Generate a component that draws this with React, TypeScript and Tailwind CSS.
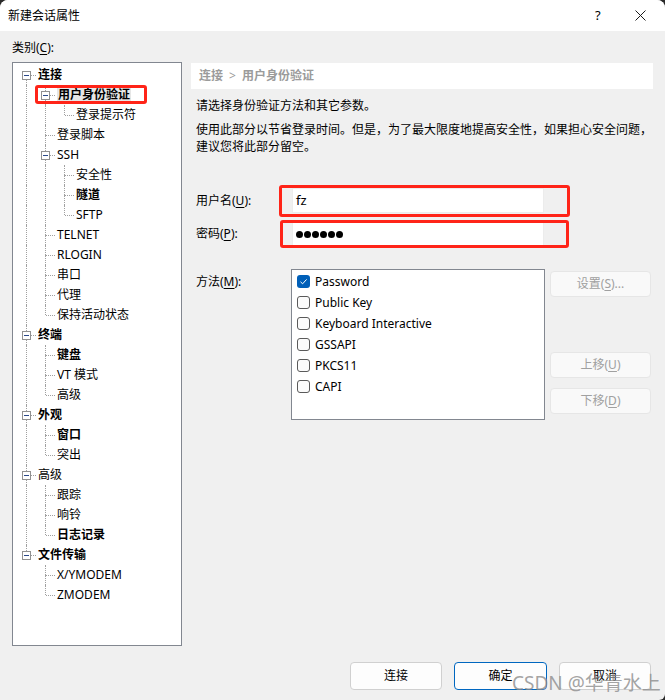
import React from "react";

type Node = { l: string; b?: boolean; sel?: boolean; c?: Node[] };

const tree: Node[] = [
  {
    l: "连接",
    b: true,
    c: [
      { l: "用户身份验证", b: true, sel: true, c: [{ l: "登录提示符" }] },
      { l: "登录脚本" },
      { l: "SSH", c: [{ l: "安全性" }, { l: "隧道", b: true }, { l: "SFTP" }] },
      { l: "TELNET" },
      { l: "RLOGIN" },
      { l: "串口" },
      { l: "代理" },
      { l: "保持活动状态" },
    ],
  },
  { l: "终端", b: true, c: [{ l: "键盘", b: true }, { l: "VT 模式" }, { l: "高级" }] },
  { l: "外观", b: true, c: [{ l: "窗口", b: true }, { l: "突出" }] },
  { l: "高级", c: [{ l: "跟踪" }, { l: "响铃" }, { l: "日志记录", b: true }] },
  { l: "文件传输", b: true, c: [{ l: "X/YMODEM" }, { l: "ZMODEM" }] },
];

function Guide({ through }: { through: boolean }) {
  return (
    <div className="relative w-[19px] h-[20px] shrink-0">
      {through && (
        <div className="absolute left-[9px] top-0 bottom-0 border-l border-dotted border-[#a0a0a0]" />
      )}
    </div>
  );
}

function Own({ up, down, box }: { up: boolean; down: boolean; box: boolean }) {
  return (
    <div className="relative w-[19px] h-[20px] shrink-0">
      {up && <div className="absolute left-[9px] top-0 h-[10px] border-l border-dotted border-[#a0a0a0]" />}
      {down && <div className="absolute left-[9px] top-[10px] bottom-0 border-l border-dotted border-[#a0a0a0]" />}
      <div className="absolute left-[10px] right-0 top-[10px] h-0 border-t border-dotted border-[#a0a0a0]" />
      {box && (
        <div className="absolute left-[5px] top-[6px] w-[9px] h-[9px] border border-[#919191] bg-white flex items-center justify-center">
          <div className="w-[5px] h-[1px] bg-[#2b4a8b]" />
        </div>
      )}
    </div>
  );
}

function renderNodes(nodes: Node[], depth: number, cont: boolean[]): React.ReactNode[] {
  const out: React.ReactNode[] = [];
  nodes.forEach((n, i) => {
    const isLast = i === nodes.length - 1;
    const up = !(depth === 0 && i === 0);
    out.push(
      <div key={`${depth}-${n.l}-${i}-${out.length}`} className="flex h-[20px] items-center">
        {cont.map((c, k) => (
          <Guide key={k} through={c} />
        ))}
        <Own up={up} down={!isLast} box={!!n.c} />
        <span
          className={`ml-[2px] leading-[18px] text-[12px] text-black whitespace-nowrap ${
            n.b ? "font-bold" : "font-normal"
          } ${n.sel ? "bg-[#e6e6e6] px-[1px]" : ""}`}
        >
          {n.l}
        </span>
      </div>
    );
    if (n.c) out.push(...renderNodes(n.c, depth + 1, [...cont, !isLast]));
  });
  return out;
}

function U({ children }: { children: React.ReactNode }) {
  return <span className="underline underline-offset-2">{children}</span>;
}

const methods = ["Password", "Public Key", "Keyboard Interactive", "GSSAPI", "PKCS11", "CAPI"];

export default function App() {
  return (
    <div
      className="w-[665px] h-[700px] overflow-hidden bg-[#2a2a2a] text-[12px] text-black"
      style={{ fontFamily: '"Noto Sans", "Noto Sans CJK SC", sans-serif' }}
    >
      <div className="relative w-[665px] h-[700px] bg-[#f0f0f0] rounded-t-[8px] rounded-br-[6px] overflow-hidden">
        {/* Title bar */}
        <div className="h-[31px] bg-white flex items-center pl-[8px] relative">
          <span className="text-[12px] leading-[16px] pt-[1px]">新建会话属性</span>
          <span className="absolute left-[595px] top-[6px] text-[13px] leading-[18px]">?</span>
          <svg className="absolute left-[635px] top-[10px]" width="11" height="11" viewBox="0 0 11 11">
            <path d="M0.5 0.5 L10.5 10.5 M10.5 0.5 L0.5 10.5" stroke="#1a1a1a" strokeWidth="1" />
          </svg>
        </div>

        <div className="px-[12px]">
          <div className="h-[31px] pt-[9px] leading-[16px]">
            类别(<U>C</U>):
          </div>

          <div className="flex gap-[9px]">
            {/* Tree */}
            <div className="relative w-[170px] h-[584px] border border-[#828790] bg-white pt-[2px] pl-[4px]">
              {renderNodes(tree, 0, [])}
              <div className="absolute left-[22px] top-[22px] w-[112px] h-[19px] border-[3px] border-[#ff2418] rounded-[3px]" />
            </div>

            {/* Right panel */}
            <div className="w-[462px]">
              <div className="mt-[1px] h-[26px] bg-white flex items-center pl-[8px] text-[#9b9b9b] font-bold">
                连接<span className="mx-[6px] font-normal">&gt;</span>用户身份验证
              </div>
              <div className="pl-[5px] mt-[8px] leading-[17px]">请选择身份验证方法和其它参数。</div>
              <div className="pl-[5px] mt-[7px] leading-[17px]">
                使用此部分以节省登录时间。但是，为了最大限度地提高安全性，如果担心安全问题，
                <br />
                建议您将此部分留空。
              </div>

              {/* Username */}
              <div className="flex items-center mt-[33px] pl-[5px]">
                <div className="w-[96px]">
                  用户名(<U>U</U>):
                </div>
                <div className="relative w-[252px] h-[25px] bg-white border border-[#ececec] flex items-center pl-[3px] text-[13px]">
                  fz
                  <div className="absolute -left-[14px] -top-[4px] w-[291px] h-[32px] border-[3px] border-[#ff2418] rounded-[3px]" />
                </div>
              </div>

              {/* Password */}
              <div className="flex items-center mt-[9px] pl-[5px]">
                <div className="w-[96px]">
                  密码(<U>P</U>):
                </div>
                <div className="relative w-[252px] h-[24px] bg-white border border-[#ececec] flex items-center pl-[3px] gap-[1px]">
                  {[0, 1, 2, 3, 4, 5].map((i) => (
                    <span key={i} className="w-[7px] h-[7px] rounded-full bg-black" />
                  ))}
                  <div className="absolute -left-[13px] -top-[3px] w-[289px] h-[28px] border-[3px] border-[#ff2418] rounded-[3px]" />
                </div>
              </div>

              {/* Methods */}
              <div className="flex mt-[23px] pl-[5px]">
                <div className="w-[95px] pt-[5px] leading-[16px]">
                  方法(<U>M</U>):
                </div>
                <div className="w-[254px] h-[151px] border border-[#828790] bg-white pt-[1px] pl-[5px]">
                  {methods.map((m, i) => (
                    <div key={m} className="flex items-center h-[21px] gap-[5px]">
                      {i === 0 ? (
                        <span className="w-[13px] h-[13px] rounded-[3px] bg-[#005fb8] flex items-center justify-center">
                          <svg width="9" height="9" viewBox="0 0 9 9">
                            <path d="M1.5 4.8 L3.6 6.8 L7.6 2.4" fill="none" stroke="#ffffff" strokeWidth="1" />
                          </svg>
                        </span>
                      ) : (
                        <span className="w-[13px] h-[13px] rounded-[3px] border border-[#5a5a5a] bg-[#fbfbfb]" />
                      )}
                      <span className="leading-[16px] text-[12px]">{m}</span>
                    </div>
                  ))}
                </div>
                <div className="ml-[5px] flex flex-col">
                  <div className="mt-[2px] w-[101px] h-[26px] rounded-[4px] border border-[#e6e6e6] bg-[#f9f9f9] text-[#a0a0a0] flex items-center justify-center">
                    设置(<U>S</U>)...
                  </div>
                  <div className="mt-[55px] w-[101px] h-[26px] rounded-[4px] border border-[#e6e6e6] bg-[#f9f9f9] text-[#a0a0a0] flex items-center justify-center">
                    上移(<U>U</U>)
                  </div>
                  <div className="mt-[10px] w-[101px] h-[26px] rounded-[4px] border border-[#e6e6e6] bg-[#f9f9f9] text-[#a0a0a0] flex items-center justify-center">
                    下移(<U>D</U>)
                  </div>
                </div>
              </div>
            </div>
          </div>

          {/* Bottom buttons */}
          <div className="flex justify-end gap-[12px] mt-[16px] pr-[2px]">
            <div className="w-[92px] h-[28px] rounded-[4px] border border-[#d0d0d0] bg-[#fdfdfd] flex items-center justify-center">
              连接
            </div>
            <div className="w-[93px] h-[28px] rounded-[4px] border border-[#0067c0] bg-[#fdfdfd] flex items-center justify-center">
              确定
            </div>
            <div className="w-[92px] h-[28px] rounded-[4px] border border-[#d0d0d0] bg-[#fdfdfd] flex items-center justify-center">
              取消
            </div>
          </div>
        </div>

        {/* Watermark */}
        <div className="absolute left-[512px] top-[670px] text-[19px] leading-[26px] text-[#8c8c8c]/80 whitespace-nowrap">
          CSDN @华青水上
        </div>
      </div>
    </div>
  );
}
